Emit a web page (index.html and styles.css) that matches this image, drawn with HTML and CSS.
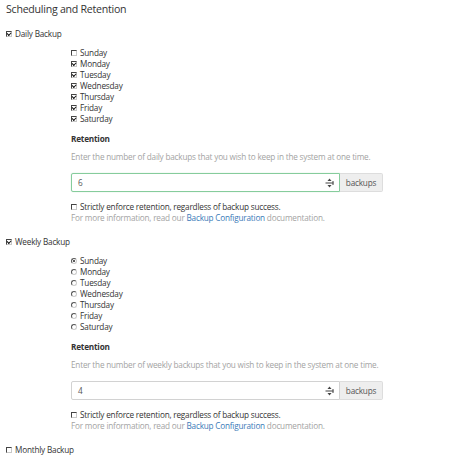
FILE: index.html
```html
<!DOCTYPE html>
<html>
<head>
<meta charset="utf-8">
<link rel="stylesheet" href="styles.css">
</head>
<body>
<div class="page">
  <h2 class="title">Scheduling and Retention</h2>

  <div class="row top-opt"><span class="cb checked"></span>Daily Backup</div>
  <div class="sub">
    <div class="days">
      <div class="row"><span class="cb"></span>Sunday</div>
      <div class="row"><span class="cb checked"></span>Monday</div>
      <div class="row"><span class="cb checked"></span>Tuesday</div>
      <div class="row"><span class="cb checked"></span>Wednesday</div>
      <div class="row"><span class="cb checked"></span>Thursday</div>
      <div class="row"><span class="cb checked"></span>Friday</div>
      <div class="row"><span class="cb checked"></span>Saturday</div>
    </div>
    <div class="label">Retention</div>
    <div class="help">Enter the number of daily backups that you wish to keep in the system at one time.</div>
    <div class="group">
      <div class="field focus"><span class="val">6</span><span class="spin"><svg width="9" height="10" viewBox="0 0 9 10"><path d="M2.5 3 L4.5 0.5 L6.5 3 Z" fill="#444"/><rect x="0.5" y="4.5" width="8" height="1" fill="#444"/><rect x="7.5" y="3" width="1" height="4" fill="#444"/><path d="M2.5 7 L4.5 9.5 L6.5 7 Z" fill="#444"/></svg></span></div>
      <div class="addon">backups</div>
    </div>
    <div class="row strict"><span class="cb"></span>Strictly enforce retention, regardless of backup success.</div>
    <div class="info">For more information, read our <a href="#">Backup Configuration</a> documentation.</div>
  </div>

  <div class="row top-opt next"><span class="cb checked"></span>Weekly Backup</div>
  <div class="sub">
    <div class="days">
      <div class="row"><span class="rb checked"></span>Sunday</div>
      <div class="row"><span class="rb"></span>Monday</div>
      <div class="row"><span class="rb"></span>Tuesday</div>
      <div class="row"><span class="rb"></span>Wednesday</div>
      <div class="row"><span class="rb"></span>Thursday</div>
      <div class="row"><span class="rb"></span>Friday</div>
      <div class="row"><span class="rb"></span>Saturday</div>
    </div>
    <div class="label">Retention</div>
    <div class="help">Enter the number of weekly backups that you wish to keep in the system at one time.</div>
    <div class="group">
      <div class="field"><span class="val">4</span><span class="spin"><svg width="9" height="10" viewBox="0 0 9 10"><path d="M2.5 3 L4.5 0.5 L6.5 3 Z" fill="#444"/><rect x="0.5" y="4.5" width="8" height="1" fill="#444"/><rect x="7.5" y="3" width="1" height="4" fill="#444"/><path d="M2.5 7 L4.5 9.5 L6.5 7 Z" fill="#444"/></svg></span></div>
      <div class="addon">backups</div>
    </div>
    <div class="row strict"><span class="cb"></span>Strictly enforce retention, regardless of backup success.</div>
    <div class="info">For more information, read our <a href="#">Backup Configuration</a> documentation.</div>
  </div>

  <div class="row top-opt next"><span class="cb"></span>Monthly Backup</div>
</div>
</body>
</html>
```

FILE: styles.css
```css
html, body {
  margin: 0;
  padding: 0;
  background: #fff;
}
.page {
  padding-left: 6px;
  font-family: "Open Sans", "DejaVu Sans", sans-serif;
  font-size: 8.2px;
  letter-spacing: -0.2px;
  color: #333;
}
.title {
  margin: 0;
  font-size: 10.6px;
  letter-spacing: -0.25px;
  font-weight: 400;
  line-height: 18px;
  color: #333;
}
.row {
  display: flex;
  align-items: center;
  height: 11px;
  line-height: 11px;
  white-space: nowrap;
}
.top-opt {
  margin-top: 10px;
}
.top-opt.next {
  margin-top: 13px;
}
.sub {
  margin-left: 65px;
}
.days {
  margin-top: 8px;
}
.cb {
  box-sizing: border-box;
  width: 6px;
  height: 6px;
  margin-right: 3px;
  border-top: 1px solid #444;
  border-left: 1px solid #444;
  border-right: 1px solid #c8c8c8;
  border-bottom: 1px solid #c8c8c8;
  background: #fff;
  position: relative;
  flex: none;
}
.cb.checked::after {
  content: "";
  position: absolute;
  left: 0px;
  top: -1px;
  width: 3px;
  height: 1.6px;
  border-left: 1.4px solid #111;
  border-bottom: 1.4px solid #111;
  transform: rotate(-45deg);
  transform-origin: center;
  margin-left: 0.3px;
  margin-top: 1px;
}
.rb {
  box-sizing: border-box;
  width: 6px;
  height: 6px;
  margin-right: 3px;
  border-radius: 50%;
  border: 1px solid;
  border-color: #555 #ccc #ccc #555;
  background: #fff;
  position: relative;
  flex: none;
}
.rb.checked::after {
  content: "";
  position: absolute;
  left: 1px;
  top: 1px;
  width: 2px;
  height: 2px;
  border-radius: 50%;
  background: #222;
}
.label {
  margin-top: 9px;
  line-height: 11px;
  font-weight: 700;
  color: #333;
}
.help {
  margin-top: 7px;
  line-height: 11px;
  color: #a3a3a3;
  white-space: nowrap;
}
.group {
  margin-top: 11px;
  display: flex;
  width: 312px;
  height: 19px;
}
.field {
  flex: 1;
  box-sizing: border-box;
  display: flex;
  align-items: center;
  justify-content: space-between;
  border: 1px solid #d2d2d2;
  border-radius: 2px 0 0 2px;
  padding: 0 5px 0 6px;
  color: #555;
}
.field.focus {
  border-color: #86cc9c;
  box-shadow: 0 0 1px rgba(90, 190, 125, 0.6);
}
.spin {
  display: flex;
  align-items: center;
}
.addon {
  box-sizing: border-box;
  width: 43px;
  display: flex;
  align-items: center;
  justify-content: center;
  background: #eee;
  border: 1px solid #ddd;
  border-left: none;
  border-radius: 0 2px 2px 0;
  color: #555;
}
.strict {
  margin-top: 9px;
}
.info {
  line-height: 11px;
  color: #a3a3a3;
  white-space: nowrap;
}
.info a {
  color: #3b7ab8;
  text-decoration: none;
}
```
